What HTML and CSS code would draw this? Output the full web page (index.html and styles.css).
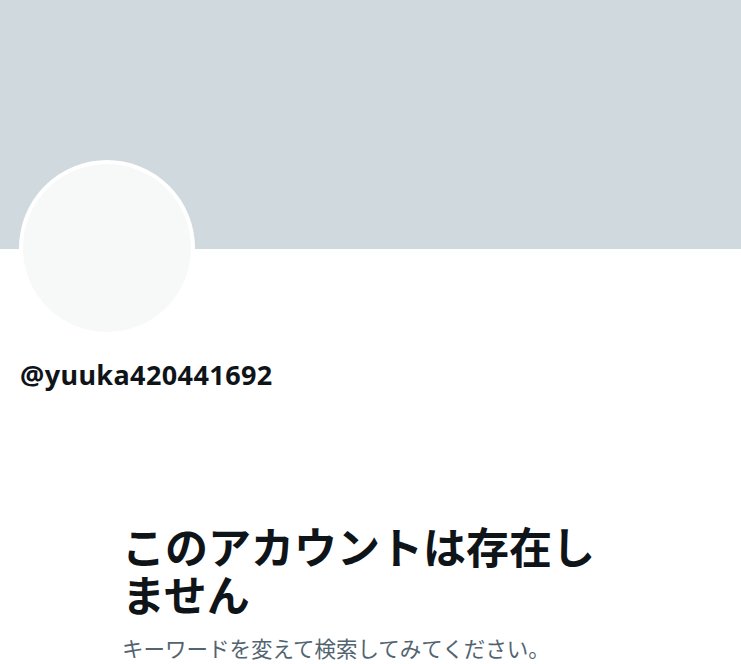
FILE: index.html
```html
<!DOCTYPE html>
<html lang="ja">
<head>
  <meta charset="UTF-8">
  <title>@yuuka420441692</title>
  <link rel="stylesheet" href="styles.css">
</head>
<body>

  <div class="banner"></div>

  <div class="profile">
    <div class="avatar"></div>
    <div class="handle">@yuuka420441692</div>
  </div>

  <div class="empty">
    <h1 class="empty-title">このアカウントは存在しません</h1>
    <p class="empty-text">キーワードを変えて検索してみてください。</p>
  </div>

</body>
</html>
```

FILE: styles.css
```css
body {
  margin: 0;
  background-color: white;
  color: rgb(15, 20, 25);
  font-family: "Noto Sans", "Noto Sans CJK JP", sans-serif;
}
.banner {
  height: 249px;
  background-color: rgb(207, 217, 222);
}
.profile {
  padding: 0 20px;
}
.avatar {
  width: 168px;
  height: 168px;
  margin-top: -89px;
  margin-left: -1px;
  border: 4px solid white;
  border-radius: 50%;
  background-color: rgb(247, 249, 249);
}
.handle {
  margin-top: 22px;
  font-size: 27px;
  line-height: 34px;
  font-weight: bold;
  letter-spacing: 0.4px;
}
.empty {
  width: 480px;
  margin: 129px 0 0 122px;
}
.empty-title {
  margin: 0;
  font-family: "Noto Sans CJK JP", sans-serif;
  font-size: 43px;
  line-height: 48px;
  font-weight: bold;
}
.empty-text {
  margin: 17px 0 0;
  font-family: "Noto Sans CJK JP", sans-serif;
  font-size: 21.5px;
  line-height: 28px;
  color: rgb(83, 100, 113);
}
```
